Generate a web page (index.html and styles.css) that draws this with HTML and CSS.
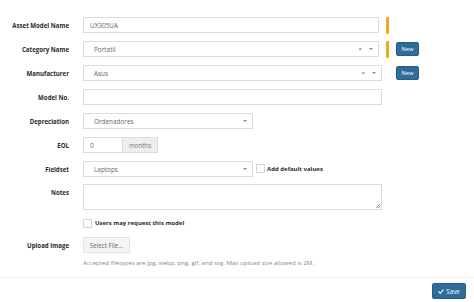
FILE: index.html
```html
<!DOCTYPE html>
<html>
<head>
<meta charset="utf-8">
<link rel="stylesheet" href="styles.css">
</head>
<body>
<div class="page">
  <form class="form">
    <div class="row">
      <label class="label">Asset Model Name</label>
      <div class="field">
        <div class="input w-req">UX305UA</div>
        <span class="req"></span>
      </div>
    </div>
    <div class="row">
      <label class="label">Category Name</label>
      <div class="field">
        <div class="input select w-req">Portatil<span class="clear">×</span><span class="caret"></span></div>
        <span class="req"></span>
        <span class="btn-new">New</span>
      </div>
    </div>
    <div class="row">
      <label class="label">Manufacturer</label>
      <div class="field">
        <div class="input select w-full">Asus<span class="clear">×</span><span class="caret"></span></div>
        <span class="btn-new new-gap">New</span>
      </div>
    </div>
    <div class="row">
      <label class="label">Model No.</label>
      <div class="field">
        <div class="input w-full"></div>
      </div>
    </div>
    <div class="row">
      <label class="label">Depreciation</label>
      <div class="field">
        <div class="input select w-half">Ordenadores<span class="caret"></span></div>
      </div>
    </div>
    <div class="row">
      <label class="label">EOL</label>
      <div class="field">
        <div class="input w-eol">0</div><div class="addon">months</div>
      </div>
    </div>
    <div class="row">
      <label class="label">Fieldset</label>
      <div class="field">
        <div class="input select w-half">Laptops<span class="caret"></span></div>
        <span class="check check-top"></span>
        <span class="check-label">Add default values</span>
      </div>
    </div>
    <div class="row row-notes">
      <label class="label">Notes</label>
      <div class="field">
        <div class="textarea w-full"><span class="grip"></span></div>
      </div>
    </div>
    <div class="row row-check">
      <span></span>
      <div class="field">
        <span class="check"></span>
        <span class="check-label">Users may request this model</span>
      </div>
    </div>
    <div class="row row-upload">
      <label class="label">Upload Image</label>
      <div class="field">
        <span class="btn-file">Select File...</span>
      </div>
    </div>
    <div class="row row-help">
      <span></span>
      <p class="help">Accepted filetypes are jpg, webp, png, gif, and svg. Max upload size allowed is 2M.</p>
    </div>
  </form>
  <div class="footer">
    <span class="btn-save"><svg class="tick" viewBox="0 0 10 8" width="6" height="5"><path d="M1 4 L4 7 L9 1" fill="none" stroke="#fff" stroke-width="1.8"/></svg>Save</span>
  </div>
</div>
</body>
</html>
```

FILE: styles.css
```css
html, body {
  margin: 0;
  padding: 0;
  background: #fff;
}
body {
  font-family: "Open Sans", "Liberation Sans", sans-serif;
  color: #333;
  width: 474px;
  height: 302px;
  overflow: hidden;
}
.page {
  display: flex;
  flex-direction: column;
}
.form {
  margin: 0;
  padding-top: 17px;
}
.row {
  display: grid;
  grid-template-columns: 69px auto;
  column-gap: 14px;
  align-items: center;
  height: 16px;
  margin-bottom: 8px;
}
.label {
  text-align: right;
  font-weight: 700;
  font-size: 6.1px;
  color: #2a2a2a;
  white-space: nowrap;
}
.field {
  display: flex;
  align-items: center;
  height: 16px;
}
.input {
  box-sizing: border-box;
  height: 16px;
  border: 1px solid #d8dbe0;
  background: #fff;
  font-size: 6.4px;
  color: #666;
  padding-left: 6px;
  display: flex;
  align-items: center;
  position: relative;
}
.select {
  padding-left: 10px;
}
.w-req { width: 296px; }
.w-full { width: 299px; }
.w-half { width: 170px; }
.w-eol { width: 40px; }
.req {
  width: 3px;
  height: 17px;
  background: #f0a818;
  margin-left: 7px;
  border-radius: 1px;
}
.clear {
  position: absolute;
  right: 16px;
  top: 3px;
  font-size: 6px;
  color: #777;
  font-weight: 700;
}
.caret {
  position: absolute;
  right: 5px;
  top: 6px;
  width: 0;
  height: 0;
  border-left: 2px solid transparent;
  border-right: 2px solid transparent;
  border-top: 2px solid #888;
}
.btn-new {
  box-sizing: border-box;
  width: 23px;
  height: 14px;
  margin-left: 7px;
  background: #2f6d98;
  border: 1px solid #285f86;
  border-radius: 2px;
  color: #fff;
  font-size: 5.8px;
  display: flex;
  align-items: center;
  justify-content: center;
}
.new-gap {
  margin-left: 14px;
}
.addon {
  box-sizing: border-box;
  height: 16px;
  width: 35px;
  border: 1px solid #d8dbe0;
  border-left: none;
  background: #eeeeee;
  font-size: 6.2px;
  color: #777;
  display: flex;
  align-items: center;
  justify-content: center;
}
.check {
  box-sizing: border-box;
  width: 9px;
  height: 9px;
  border: 1px solid #d6d6d6;
  background: #fff;
  flex: none;
}
.check-top {
  margin-left: 3px;
  align-self: flex-start;
  margin-top: 3px;
}
.check-label {
  font-size: 6px;
  font-weight: 700;
  color: #2a2a2a;
  margin-left: 2px;
  white-space: nowrap;
}
.row-notes {
  height: 26px;
  margin-top: -1px;
  align-items: start;
}
.row-notes .label {
  padding-top: 4px;
}
.row-notes .field {
  height: 26px;
}
.textarea {
  box-sizing: border-box;
  height: 26px;
  border: 1px solid #d8dbe0;
  position: relative;
}
.grip {
  position: absolute;
  right: 1px;
  bottom: 1px;
  width: 4px;
  height: 4px;
  background: linear-gradient(135deg, transparent 45%, #999 45%, #999 55%, transparent 55%, transparent 70%, #999 70%, #999 80%, transparent 80%);
}
.row-check {
  height: 10px;
  margin-top: 0;
  margin-bottom: 9px;
}
.row-check .field {
  height: 10px;
}
.row-check .check-label {
  margin-left: 3px;
}
.row-upload {
  margin-bottom: 3px;
}
.btn-file {
  box-sizing: border-box;
  height: 16px;
  width: 47px;
  background: #f4f4f4;
  border: 1px solid #e2e2e2;
  font-size: 6.2px;
  color: #666;
  display: flex;
  align-items: center;
  justify-content: center;
}
.row-help {
  height: 12px;
  margin-bottom: 0;
}
.help {
  margin: 0;
  font-size: 6.1px;
  color: #888;
  white-space: nowrap;
}
.footer {
  margin-top: 9px;
  border-top: 1px solid #f0f0f0;
  padding: 5px 8px 0 0;
  display: flex;
  justify-content: flex-end;
}
.btn-save {
  box-sizing: border-box;
  width: 34px;
  height: 16px;
  background: #2f6d98;
  border: 1px solid #285f86;
  border-radius: 2px;
  color: #fff;
  font-size: 6.2px;
  display: flex;
  align-items: center;
  justify-content: center;
  gap: 2px;
}
.tick {
  display: block;
}
```
